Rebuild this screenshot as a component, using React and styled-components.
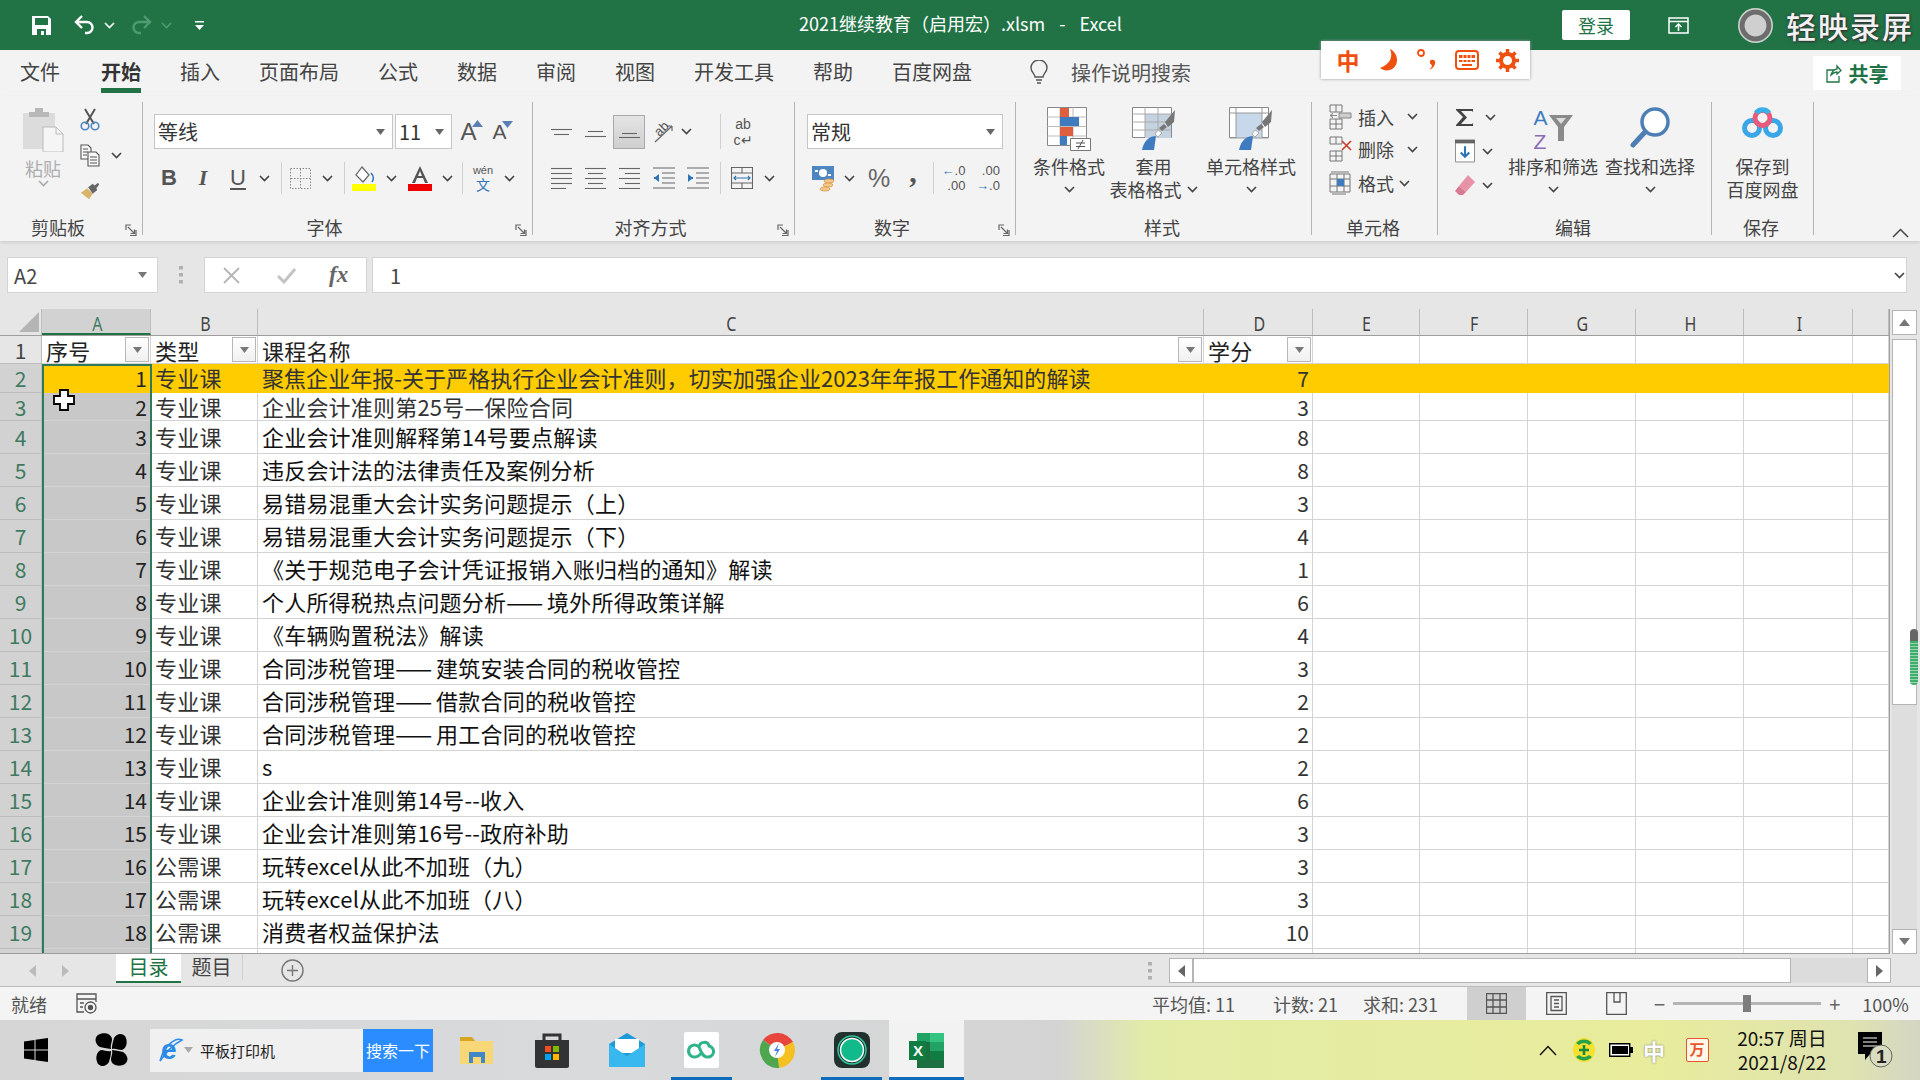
import React from "react";
import styled, { createGlobalStyle } from "styled-components";

const GlobalStyle = createGlobalStyle`
  html, body { margin: 0; padding: 0; background: #e6e6e6; overflow: hidden; }
  * { box-sizing: border-box; }
  body { font-family: "Noto Sans CJK SC", "Noto Sans", sans-serif; }
`;

const GREEN = "#217346";

const Page = styled.div`
  position: relative;
  width: 1920px;
  height: 1080px;
  display: flex;
  flex-direction: column;
  overflow: hidden;
  color: #444;
`;

/* ---------- small shared parts ---------- */

const Tool = styled.div`
  flex: none;
  width: ${(p) => p.$w || 20}px;
  height: ${(p) => p.$h || 32}px;
  margin-left: ${(p) => p.$ml || 0}px;
  display: flex;
  align-items: center;
  justify-content: center;
  color: ${(p) => p.$color || "#444"};
  font-size: ${(p) => p.$size || 18}px;
`;

const VSep = styled.div`
  flex: none;
  width: 1px;
  height: ${(p) => p.$h || 32}px;
  margin-left: ${(p) => p.$ml || 0}px;
  background: #d0d0d0;
`;

const Chev = ({ color = "#444", up }) => (
  <svg width="11" height="7" viewBox="0 0 11 7">
    <path d={up ? "M1 6l4.5-4.5L10 6" : "M1 1l4.5 4.5L10 1"} fill="none" stroke={color} strokeWidth="1.6" />
  </svg>
);

const Tri = ({ color = "#666" }) => (
  <svg width="9" height="6" viewBox="0 0 9 6">
    <path d="M0 0h9L4.5 6z" fill={color} />
  </svg>
);

const Launcher = styled.div`
  position: absolute;
  right: 5px;
  bottom: -1px;
  width: 12px;
  height: 12px;
  display: flex;
`;

const LauncherIcon = () => (
  <Launcher>
    <svg width="12" height="12" viewBox="0 0 12 12" fill="none" stroke="#666" strokeWidth="1.2">
      <path d="M11 6v5.500H5M1 6V1h5M3 3l6.500 6.500M9.500 5.500v4h-4" />
    </svg>
  </Launcher>
);

/* ---------- title bar ---------- */

const TitleBar = styled.div`
  flex: none;
  height: 50px;
  background: ${GREEN};
  display: flex;
  align-items: center;
  padding: 0 6px 0 16px;
`;

const Title = styled.div`
  margin-left: 592px;
  margin-top: -4px;
  color: #fff;
  font-size: 18px;
  word-spacing: 3px;
  white-space: pre;
`;

const Login = styled.div`
  margin-left: auto;
  width: 68px;
  height: 30px;
  background: #fff;
  border-radius: 2px;
  color: ${GREEN};
  font-size: 18px;
  display: flex;
  align-items: center;
  justify-content: center;
`;

const RecDot = styled.div`
  flex: none;
  width: 35px;
  height: 35px;
  margin-left: 12px;
  border-radius: 50%;
  background: radial-gradient(circle, #cfcfcf 0 42%, #6d6d6d 46% 62%, #c8d0c8 66% 100%);
`;

const RecText = styled.div`
  margin-left: 13px;
  color: #f2f2f2;
  font-size: 30px;
  letter-spacing: 2px;
  line-height: 1;
  font-weight: 500;
  white-space: nowrap;
  text-shadow: 0 0 3px #333, 1px 1px 2px #333;
`;

const ImeBar = styled.div`
  position: absolute;
  left: 1321px;
  top: 41px;
  width: 209px;
  height: 38px;
  background: #fff;
  box-shadow: 0 0 3px #999;
  display: flex;
  align-items: center;
  padding-left: 7px;
  z-index: 3;
`;

const ImeChar = styled.span`
  color: #f0500f;
  font-size: 23px;
  font-weight: 700;
  line-height: 1;
`;

/* ---------- tab bar ---------- */

const TabBar = styled.div`
  flex: none;
  height: 46px;
  background: #f3f3f3;
  display: flex;
  align-items: flex-start;
  gap: 39px;
  padding-left: 20px;
`;

const Tab = styled.div`
  position: relative;
  height: 46px;
  font-size: 20px;
  line-height: 44px;
  color: ${(p) => (p.$active ? "#333" : "#444")};
  font-weight: ${(p) => (p.$active ? 700 : 400)};
  margin-right: ${(p) => p.$mr || 0}px;
  ${(p) =>
    p.$active &&
    `&::after {
      content: "";
      position: absolute;
      left: 0;
      right: 0;
      bottom: 3px;
      height: 5px;
      background: ${GREEN};
    }`}
`;

const SearchHint = styled.div`
  display: flex;
  align-items: center;
  gap: 23px;
  height: 44px;
  margin-left: 19px;
  font-size: 20px;
  color: #555;
`;

const ShareBtn = styled.div`
  margin: 6px 19px 0 auto;
  width: 88px;
  height: 34px;
  background: #fff;
  display: flex;
  align-items: center;
  justify-content: center;
  gap: 7px;
  color: ${GREEN};
  font-size: 20px;
  font-weight: 700;
`;

/* ---------- ribbon ---------- */

const Ribbon = styled.div`
  flex: none;
  height: 145px;
  padding-top: 6px;
  background: #f3f3f3;
  display: flex;
  align-items: flex-start;
  box-shadow: 0 2px 3px #d0d0d0;
  position: relative;
  z-index: 1;
`;

const Group = styled.div`
  position: relative;
  flex: none;
  width: ${(p) => p.$w}px;
  height: 133px;
  border-right: 1px solid #b5b5b5;
`;

const GroupBody = styled.div`
  height: 115px;
  padding-left: ${(p) => p.$pad || 0}px;
  display: flex;
  flex-direction: ${(p) => (p.$row ? "row" : "column")};
`;

const GroupLabel = styled.div`
  height: 20px;
  line-height: 20px;
  font-size: 18px;
  text-align: center;
  color: #444;
  padding-right: ${(p) => (p.$launcher ? 26 : 3)}px;
`;

const Row = styled.div`
  flex: none;
  display: flex;
  align-items: center;
  height: ${(p) => p.$h}px;
  margin-top: ${(p) => p.$mt || 0}px;
  padding-left: ${(p) => p.$pl || 0}px;
`;

const ComboBox = styled.div`
  flex: none;
  width: ${(p) => p.$w}px;
  height: 35px;
  margin-left: ${(p) => p.$ml || 0}px;
  background: #fff;
  border: 1px solid #c6c6c6;
  display: flex;
  align-items: center;
  justify-content: space-between;
  padding: 0 7px 0 3px;
  font-size: 20px;
  color: #333;
`;

const Pressed = styled(Tool)`
  height: 34px;
  background: linear-gradient(#e4e4e4, #cfcfcf);
  border: 1px solid #a9a9a9;
  margin-left: 1px;
`;

const PasteCol = styled.div`
  width: 58px;
  margin-left: 14px;
  padding-top: 5px;
  display: flex;
  flex-direction: column;
  align-items: center;
  color: #aaa;
  font-size: 18px;
`;

const PasteText = styled.div`
  margin-top: 4px;
  line-height: 24px;
  color: #adadad;
`;

const ToolCol = styled.div`
  display: flex;
  flex-direction: column;
`;

const BigBtn = styled.div`
  flex: none;
  width: ${(p) => p.$w}px;
  padding-top: 5px;
  display: flex;
  flex-direction: column;
  align-items: center;
`;

const BigIcon = styled.div`
  height: 48px;
  display: flex;
  justify-content: center;
`;

const BigLine = styled.div`
  height: 23px;
  line-height: 23px;
  font-size: 18px;
  white-space: nowrap;
  color: #444;
  display: flex;
  align-items: center;
  gap: 5px;
`;

const CellsText = styled.div`
  flex: none;
  width: 36px;
  margin-left: 5px;
  font-size: 18px;
  white-space: nowrap;
  color: #444;
`;

const AA = styled.span`
  position: relative;
  font-family: "Liberation Sans", sans-serif;
  font-size: ${(p) => p.$size}px;
  color: #555;
  line-height: 1;
`;

const AAMark = styled.span`
  position: absolute;
  right: -6px;
  top: 0;
  display: flex;
`;

const StyleLetter = styled.span`
  font-family: ${(p) => (p.$serif ? '"Liberation Serif", serif' : '"Liberation Sans", sans-serif')};
  font-weight: ${(p) => (p.$bold ? 700 : 400)};
  font-style: ${(p) => (p.$italic ? "italic" : "normal")};
  text-decoration: ${(p) => (p.$under ? "underline" : "none")};
  text-underline-offset: 3px;
  font-size: 22px;
  color: #555;
`;

const WenBox = styled.div`
  display: flex;
  flex-direction: column;
  align-items: center;
  color: #2f75b5;
  line-height: 1;
`;

const WenTop = styled.span`
  font-size: 11px;
  line-height: 12px;
  color: #555;
  font-family: "Liberation Sans", sans-serif;
`;

const WenBottom = styled.span`
  font-size: 14px;
  line-height: 16px;
  font-family: "Noto Sans CJK SC", sans-serif;
`;

const WrapBox = styled.div`
  display: flex;
  flex-direction: column;
  align-items: center;
  font-family: "Liberation Sans", sans-serif;
  font-size: 14px;
  line-height: 16px;
  color: #555;
`;

const Percent = styled.span`
  font-family: "Liberation Sans", sans-serif;
  font-size: 25px;
  color: #666;
`;

const Comma = styled.span`
  font-family: "Liberation Serif", serif;
  font-weight: 700;
  font-size: 30px;
  line-height: 1;
  margin-top: -12px;
  color: #555;
`;

const Decimals = styled.div`
  font-family: "Liberation Sans", sans-serif;
  font-size: 13px;
  line-height: 15px;
  color: #555;
  text-align: right;
  white-space: nowrap;
`;

const DecArrow = styled.span`
  color: #2f75b5;
  font-weight: 700;
`;

const SortBox = styled.div`
  display: flex;
  align-items: flex-start;
  height: 44px;
`;

const SortLetters = styled.div`
  display: flex;
  flex-direction: column;
  font-family: "Liberation Sans", sans-serif;
  font-size: 21px;
  line-height: 24.2px;
  margin-top: -1px;
`;

const SortLetter = styled.span`
  color: ${(p) => p.$color};
`;

const Collapse = styled.div`
  position: absolute;
  right: 11px;
  bottom: 3px;
  display: flex;
`;

/* ---------- formula bar ---------- */

const FormulaBar = styled.div`
  flex: none;
  height: 68px;
  padding: 16px 13px 0 7px;
  background: #e6e6e6;
  display: flex;
  align-items: flex-start;
`;

const NameBox = styled.div`
  flex: none;
  width: 151px;
  height: 36px;
  background: #fff;
  border: 1px solid #d4d4d4;
  display: flex;
  align-items: center;
  justify-content: space-between;
  padding: 0 10px 0 6px;
  font-size: 20px;
  color: #444;
`;

const Grip = styled.div`
  flex: none;
  width: 46px;
  height: 36px;
  display: flex;
  align-items: center;
  justify-content: center;
`;

const FxBox = styled.div`
  flex: none;
  width: 163px;
  height: 36px;
  background: #fff;
  border: 1px solid #d4d4d4;
  display: flex;
  align-items: center;
  padding-left: 17px;
`;

const FxSign = styled.span`
  font-family: "Liberation Serif", serif;
  font-style: italic;
  font-weight: 700;
  font-size: 23px;
  color: #666;
  margin-left: 33px;
`;

const FormulaInput = styled.div`
  flex: 1;
  height: 36px;
  margin-left: 5px;
  background: #fff;
  border: 1px solid #d4d4d4;
  display: flex;
  align-items: center;
  justify-content: space-between;
  padding: 0 0 0 17px;
  font-size: 20px;
  color: #444;
`;

const InputChev = styled.div`
  margin-right: 1px;
  display: flex;
`;

/* ---------- sheet ---------- */

const SheetArea = styled.div`
  position: relative;
  flex: none;
  height: 645px;
  display: flex;
  background: #e6e6e6;
`;

const Sheet = styled.div`
  position: relative;
  flex: none;
  width: 1890px;
  height: 645px;
  overflow: hidden;
  border-right: 1px solid #9e9e9e;
  border-bottom: 1px solid #9e9e9e;
`;

const SheetRow = styled.div`
  display: flex;
  height: ${(p) => p.$h}px;
  background: ${(p) => (p.$hl ? "#ffcc00" : "#fff")};
`;

const HeadRow = styled.div`
  display: flex;
  height: 27px;
  background: #e6e6e6;
  border-bottom: 1px solid #9e9e9e;
`;

const ColHead = styled.div`
  flex: none;
  width: ${(p) => p.$w}px;
  background: ${(p) => (p.$sel ? "#d2d2d2" : "#e6e6e6")};
  color: ${(p) => (p.$sel ? "#3f7a5f" : "#444")};
  border-right: 1px solid #bdbdbd;
  ${(p) => p.$sel && `border-bottom: 2px solid ${GREEN};`}
  font-size: 20px;
  line-height: 28px;
  padding-left: 2px;
  text-align: center;
`;

const ColLetter = styled.span`
  display: inline-block;
  transform: scaleX(0.8);
  font-family: "Noto Sans", sans-serif;
`;

const Corner = styled.div`
  flex: none;
  width: 42px;
  display: flex;
  align-items: flex-end;
  justify-content: flex-end;
  padding: 0 2px 3px 0;
  border-right: 1px solid #bdbdbd;
`;

const RowHead = styled.div`
  flex: none;
  width: 42px;
  background: ${(p) => (p.$sel ? "#d2d2d2" : "#e6e6e6")};
  color: ${(p) => (p.$sel ? "#3f7a5f" : "#444")};
  border-right: 1px solid #bdbdbd;
  border-bottom: 1px solid #bdbdbd;
  font-size: 21px;
  text-align: center;
  display: flex;
  align-items: center;
  justify-content: center;
  overflow: hidden;
`;

const Cell = styled.div`
  position: relative;
  flex: none;
  width: ${(p) => p.$w}px;
  padding: ${(p) => (p.$num ? "0 3px 0 0" : p.$head ? "0 0 0 4px" : "0 0 2px 4px")};
  background: ${(p) => (p.$sel ? "#c8c8c8" : "transparent")};
  border-right: 1px solid ${(p) => (p.$bare ? "transparent" : "#d4d4d4")};
  border-bottom: 1px solid ${(p) => (p.$bare ? "transparent" : "#d4d4d4")};
  display: flex;
  align-items: center;
  justify-content: ${(p) => (p.$num ? "flex-end" : "flex-start")};
  font-size: ${(p) => (p.$num ? 21 : 22)}px;
  letter-spacing: ${(p) => (p.$num ? 0 : p.$tight ? 0.05 : 0.2)}px;
  color: ${(p) => p.$color || "#222"};
  white-space: nowrap;
`;

const WideDash = styled.span`
  letter-spacing: 4px;
`;

const FilterBtn = styled.div`
  position: absolute;
  right: 1px;
  top: 1px;
  width: 24px;
  height: 25px;
  background: linear-gradient(#fff, #f0f0f0);
  border: 1px solid #b8b8b8;
  display: flex;
  align-items: center;
  justify-content: center;
`;

const RangeBox = styled.div`
  position: absolute;
  left: 42px;
  top: 55px;
  width: 110px;
  height: 595px;
  border: 2px solid #2f7a5c;
  pointer-events: none;
`;

const CursorMark = styled.div`
  position: absolute;
  left: 53px;
  top: 80px;
  display: flex;
`;

const VScroll = styled.div`
  flex: none;
  width: 25px;
  margin-left: 2px;
  display: flex;
  flex-direction: column;
`;

const ScrollBtn = styled.div`
  flex: none;
  height: 25px;
  margin-top: ${(p) => p.$mt || 0}px;
  background: #fff;
  border: 1px solid #b5b5b5;
  display: flex;
  align-items: center;
  justify-content: center;
`;

const VThumb = styled.div`
  flex: none;
  height: 366px;
  margin-top: 4px;
  background: #fff;
  border: 1px solid #b5b5b5;
`;

const VTrack = styled.div`
  flex: 1;
  background: #dedede;
`;

const GreenHandle = styled.div`
  position: absolute;
  left: 1910px;
  top: 320px;
  width: 8px;
  height: 56px;
  border-radius: 4px;
  background: repeating-linear-gradient(#3fae6b 0 2px, #9ad4ae 2px 3px);
  border-top: 12px solid #666;
`;

/* ---------- sheet tabs ---------- */

const SheetTabs = styled.div`
  flex: none;
  height: 33px;
  background: #e6e6e6;
  border-bottom: 1px solid #bcbcbc;
  display: flex;
  align-items: flex-start;
`;

const SheetTab = styled.div`
  flex: none;
  height: ${(p) => (p.$active ? 29 : 28)}px;
  width: ${(p) => p.$w}px;
  background: ${(p) => (p.$active ? "#fff" : "transparent")};
  border-bottom: ${(p) => (p.$active ? `2px solid ${GREEN}` : "none")};
  color: ${(p) => (p.$active ? GREEN : "#444")};
  font-size: 20px;
  line-height: 26px;
  text-align: center;
`;

const HScrollBtn = styled.div`
  flex: none;
  width: 24px;
  height: 25px;
  margin: 4px 0 0 ${(p) => p.$ml || 0}px;
  background: #fff;
  border: 1px solid #b5b5b5;
  display: flex;
  align-items: center;
  justify-content: center;
`;

const HThumb = styled.div`
  flex: none;
  width: 598px;
  height: 25px;
  margin-top: 4px;
  background: #fff;
  border: 1px solid #b5b5b5;
`;

const HTrack = styled.div`
  flex: none;
  width: 76px;
  height: 25px;
  margin-top: 4px;
  background: #dcdcdc;
`;

/* ---------- status bar ---------- */

const StatusBar = styled.div`
  flex: none;
  height: 33px;
  background: #f4f4f4;
  display: flex;
  align-items: center;
  font-size: 18px;
  color: #555;
  padding-left: 11px;
`;

const StatText = styled.span`
  flex: none;
  margin-left: ${(p) => p.$ml}px;
  white-space: nowrap;
`;

const ViewBtn = styled.div`
  flex: none;
  width: ${(p) => p.$w}px;
  height: 33px;
  margin-left: ${(p) => p.$ml || 0}px;
  background: ${(p) => (p.$on ? "#cfcfcf" : "transparent")};
  display: flex;
  align-items: center;
  justify-content: center;
`;

const Slider = styled.div`
  position: relative;
  flex: none;
  width: 148px;
  height: 3px;
  background: #b5b5b5;
  margin-left: 8px;
`;

const SliderThumb = styled.div`
  position: absolute;
  left: 70px;
  top: -7px;
  width: 8px;
  height: 17px;
  background: #7d7d7d;
`;

const ZoomSign = styled.span`
  flex: none;
  margin-left: ${(p) => p.$ml}px;
  font-size: 20px;
  line-height: 1;
  color: #666;
`;

/* ---------- taskbar ---------- */

const Taskbar = styled.div`
  flex: none;
  height: 60px;
  display: flex;
  align-items: center;
  background: linear-gradient(90deg, #d6d6d6 0, #d8dadb 600px, #d4d4d4 1060px, #e3eca6 1150px, #e8ec9c 1650px, #dfe3b0 1850px, #d4d6c4 1920px);
`;

const TaskSlot = styled.div`
  position: relative;
  flex: none;
  width: ${(p) => p.$w}px;
  height: 60px;
  display: flex;
  align-items: center;
  justify-content: center;
  ${(p) => p.$active && "background: #f2f2f2;"}
  ${(p) =>
    p.$mark &&
    `&::after {
      content: "";
      position: absolute;
      left: 50%;
      bottom: 0;
      width: ${p.$mark}px;
      height: 3px;
      margin-left: -${p.$mark / 2}px;
      background: #0f6cbd;
    }`}
`;

const SearchBox = styled.div`
  flex: none;
  width: 213px;
  height: 43px;
  background: #f0f0f0;
  display: flex;
  align-items: center;
  padding-left: 8px;
  font-size: 15px;
  color: #222;
`;

const SearchLabel = styled.span`
  margin-left: 7px;
`;

const SearchGo = styled.div`
  flex: none;
  width: 70px;
  height: 43px;
  margin-right: 6px;
  background: #2b8cff;
  color: #fff;
  font-size: 16px;
  display: flex;
  align-items: center;
  justify-content: center;
`;

const Tray = styled.div`
  margin-left: auto;
  display: flex;
  align-items: center;
  padding-right: 8px;
`;

const Clock = styled.div`
  flex: none;
  width: 112px;
  text-align: center;
  font-size: 19px;
  line-height: 24px;
  color: #111;
  white-space: nowrap;
`;

const TrayIme = styled.span`
  color: #fff;
  font-size: 22px;
  font-weight: 700;
  line-height: 1;
  text-shadow: 0 0 2px #667;
`;

const WanBox = styled.div`
  width: 23px;
  height: 24px;
  border: 1.5px solid #e8552d;
  border-radius: 2px;
  background: #fff7e8;
  color: #e8552d;
  font-size: 15px;
  line-height: 20px;
  font-weight: 700;
  text-align: center;
`;

/* ---------- drawn icons ---------- */

const SaveIcon = () => (
  <svg width="19" height="19" viewBox="0 0 19 19">
    <path d="M0 0h16l3 3v16H0z" fill="#fff" />
    <path d="M3 2h13v7H3z" fill={GREEN} />
    <path d="M5 13h9v6h-2v-4H9v4H5z" fill={GREEN} />
  </svg>
);

const UndoIcon = ({ color = "#fff", flip }) => (
  <svg width="23" height="20" viewBox="0 0 23 20" transform={flip ? "scale(-1 1)" : undefined}>
    <path d="M9 1L3 7l6 6M3 7h11a5.500 5.500 0 0 1 0 11h-2" fill="none" stroke={color} strokeWidth="2.4" />
  </svg>
);

const CustomizeIcon = () => (
  <svg width="9" height="11" viewBox="0 0 9 11">
    <path d="M0 1h9v1.600H0z M0 5h9L4.500 10z" fill="#fff" />
  </svg>
);

const RestoreIcon = () => (
  <svg width="21" height="17" viewBox="0 0 21 17" fill="none" stroke="#fff" strokeWidth="1.5">
    <path d="M1 1h19v15H1zM1 4.500h19M10.500 14V7.500M7.500 10l3-3 3 3" />
  </svg>
);

const MoonIcon = () => (
  <svg width="22" height="26" viewBox="0 0 22 26">
    <path d="M13 2c3 7 1 15-10 19 6 5 17 2 17-8 0-5-3-9-7-11z" fill="#f0500f" />
  </svg>
);

const PunctIcon = () => (
  <svg width="22" height="26" viewBox="0 0 22 26">
    <circle cx="5" cy="6" r="3" fill="none" stroke="#f0500f" strokeWidth="1.8" />
    <path d="M15 13c3-1 5 1 4 4s-3 5-6 6c2-2 3-3 3-5-2 0-3-4-1-5z" fill="#f0500f" />
  </svg>
);

const KeyboardIcon = () => (
  <svg width="24" height="20" viewBox="0 0 24 20">
    <rect x="1" y="1" width="22" height="18" rx="3" fill="none" stroke="#f0500f" strokeWidth="2" />
    <path d="M4 5h16v3H4zM4 10h16v2H4zM7 14h10v2H7z" fill="#f0500f" />
    <path d="M8 5v7M12 5v7M16 5v7" stroke="#fff" strokeWidth="1" />
  </svg>
);

const GearIcon = () => (
  <svg width="23" height="23" viewBox="0 0 23 23">
    <circle cx="11.500" cy="11.500" r="6.500" fill="none" stroke="#f0500f" strokeWidth="4" />
    <path d="M11.500 0v4M11.500 19v4M0 11.500h4M19 11.500h4M3.500 3.500l3 3M16.500 16.500l3 3M19.500 3.500l-3 3M6.500 16.500l-3 3" stroke="#f0500f" strokeWidth="3.500" />
  </svg>
);

const BulbIcon = () => (
  <svg width="18" height="25" viewBox="0 0 18 25" fill="none" stroke="#555" strokeWidth="1.4">
    <path d="M5 17c0-3-4-5-4-9a8 8 0 0 1 16 0c0 4-4 6-4 9zM6 20h6M7 23h4" />
  </svg>
);

const ShareIcon = () => (
  <svg width="16" height="19" viewBox="0 0 16 19" fill="none" stroke={GREEN} strokeWidth="1.3">
    <path d="M9 6H1v12h12v-6M5 11c1-4 4-6 6-6V2l4 4.500L11 10V8c-2 0-4 1-6 3z" />
  </svg>
);

const PasteIcon = () => (
  <svg width="41" height="45" viewBox="0 0 41 45">
    <path d="M0 6h32v36H0z" fill="#dcdcdc" />
    <path d="M6 5h6V1h8v4h6v5H6z" fill="#b8b8b8" />
    <path d="M20 20h13l7 7v18H20z" fill="#f5f5f5" stroke="#bcbcbc" />
    <path d="M33 20v7h7" fill="none" stroke="#bcbcbc" />
  </svg>
);

const ScissorsIcon = () => (
  <svg width="20" height="23" viewBox="0 0 20 23" fill="none">
    <path d="M5 1l9 15M15 1L6 16" stroke="#555" strokeWidth="2" />
    <circle cx="5" cy="18" r="3.800" stroke="#4d86c0" strokeWidth="1.600" />
    <circle cx="15" cy="18" r="3.800" stroke="#4d86c0" strokeWidth="1.600" />
  </svg>
);

const CopyIcon = () => (
  <svg width="20" height="23" viewBox="0 0 20 23" fill="#f8f8f8" stroke="#555" strokeWidth="1.100">
    <path d="M1 1h7l3 3v11H1zM3 5h5M3 8h5M3 11h4" />
    <path d="M8 8h8l3 3v11H8zM10 13h7M10 16h7M10 19h7" />
  </svg>
);

const BrushIcon = () => (
  <svg width="22" height="20" viewBox="0 0 22 20">
    <path d="M8 7l6 6-4 6-9-7z" fill="#d9b36a" />
    <path d="M9 6l5-4 2 2 4-3 1 2-3 4 1 2-5 4z" fill="#666" />
  </svg>
);

const BorderIcon = () => (
  <svg width="21" height="21" viewBox="0 0 21 21" fill="none" stroke="#888" strokeWidth="1" strokeDasharray="1.500 1.500">
    <path d="M.5.5h20v20H.5zM10.500 1v19M1 10.500h19" />
  </svg>
);

const FillIcon = () => (
  <svg width="24" height="26" viewBox="0 0 24 26">
    <path d="M10 2l7 8-6 7-7-7z" fill="#fff" stroke="#666" strokeWidth="1.200" />
    <path d="M19 8c3 3 3 6 1 9" fill="none" stroke="#2f75b5" strokeWidth="1.500" />
    <path d="M0 19h24v7H0z" fill="#ffff00" />
  </svg>
);

const FontColorIcon = () => (
  <svg width="24" height="26" viewBox="0 0 24 26">
    <path d="M12 1L4 18h3l2-5h6l2 5h3zM10 11l2-5 2 5z" fill="#555" fillRule="evenodd" />
    <path d="M0 19h24v7H0z" fill="#ee0000" />
  </svg>
);

const AlignLines = ({ lines, w = 21, h = 14 }) => (
  <svg width={w} height={h} viewBox={`0 0 ${w} ${h}`}>
    {lines.map(([x1, x2, y]) => (
      <path key={`${x1}-${y}`} d={`M${x1} ${y + 0.5}H${x2}`} stroke="#666" strokeWidth="1.100" />
    ))}
  </svg>
);

const OrientIcon = () => (
  <svg width="24" height="28" viewBox="0 0 24 28" fill="none">
    <path d="M4 24L21 8M21 8h-5M21 8v5" stroke="#666" strokeWidth="1.200" />
    <text x="5" y="17" fontSize="13" fill="#555" fontFamily="Liberation Sans" transform="rotate(-45 9 14)">ab</text>
  </svg>
);

const IndentIcon = ({ flip }) => (
  <svg width="22" height="22" viewBox="0 0 22 22" fill="none">
    <path d="M9 6h13M9 11h13M9 16h13M0 1h22M0 21h22" stroke="#666" strokeWidth="1.100" />
    <path d={flip ? "M1 11l5-4v8z" : "M6 11L1 7v8z"} fill="#2f75b5" />
    <path d="M1 10h5v2H1z" fill="#2f75b5" />
  </svg>
);

const MergeIcon = () => (
  <svg width="22" height="22" viewBox="0 0 22 22" fill="none" stroke="#666" strokeWidth="1.100">
    <path d="M.5.5h21v21H.5zM.5 6h21M.5 16h21M11 .5V6M11 16v5.500" />
    <path d="M3 11h16M5 9l-2 2 2 2M17 9l2 2-2 2" stroke="#2f75b5" />
  </svg>
);

const CurrencyIcon = () => (
  <svg width="25" height="27" viewBox="0 0 25 27">
    <path d="M1 1h22v14H1z" fill="#4d86c0" />
    <circle cx="12" cy="8" r="4" fill="#fff" />
    <path d="M4 6h3M17 10h3" stroke="#fff" strokeWidth="2" />
    <g fill="#f2c88a" stroke="#d89b4a" strokeWidth=".8">
      <ellipse cx="18" cy="16" rx="5" ry="2" />
      <ellipse cx="17" cy="20" rx="5" ry="2" />
      <ellipse cx="14" cy="24" rx="5" ry="2" />
    </g>
  </svg>
);

const CondIcon = () => (
  <svg width="44" height="44" viewBox="0 0 44 44">
    <path d="M.5.5h39v38H.5z" fill="#fff" stroke="#888" />
    <path d="M.5 10h39M.5 19.500h39M.5 29h39M13 .5v38M26 .5v38" stroke="#bbb" />
    <path d="M13 1h9v9h-9zM13 20h13v9H13z" fill="#dd5f3f" />
    <path d="M13 10h19v9H13zM13 29h7v9h-7z" fill="#3f7cbf" />
    <path d="M23.500 31.500h20v12h-20z" fill="#fff" stroke="#777" />
    <path d="M29 36h9M29 39.500h9M36 33l-5 9" stroke="#555" fill="none" />
  </svg>
);

const TableStyleIcon = ({ plain }) => (
  <svg width="44" height="44" viewBox="0 0 44 44">
    <path d="M.5.5h39v30H.5z" fill="#fff" stroke="#888" />
    {plain ? (
      <>
        <path d="M7 6h26v25H7z" fill="#c6d8ea" />
        <path d="M.5 6h39M.5 31h39M7 .5v30M33 .5v30" stroke="#999" />
      </>
    ) : (
      <>
        <path d="M13 7h26v24H13z" fill="#c5d2df" />
        <path d="M.5 7h39M.5 15h39M.5 23h39M13 .5v30M26 .5v30" stroke="#aaa" />
      </>
    )}
    <path d="M10 43c2-10 8-14 14-14l-2 14z" fill="#3f7cbf" />
    <path d="M26 30l-3-3 3-4 4 3z" fill="#fff" stroke="#aaa" />
    <path d="M30 24l-3-3 5-4 3 3zM34 17l-1-2 10-12-1 12-6 5z" fill="#777" />
  </svg>
);

const CellOp = ({ del, fmt }) => (
  <svg width="24" height="26" viewBox="0 0 24 26" fill="none" stroke="#777" strokeWidth="1">
    {fmt ? (
      <>
        <path d="M1 4h20v18H1zM1 9h20M1 16h20M8 4v18M15 4v18M2 2h18" />
        <path d="M8 9h7v7H8z" fill="#3f7cbf" stroke="none" />
        <path d="M3 24h14" />
      </>
    ) : (
      <>
        <path d="M1 1h12v7H1zM7 1v7M1 15h12v10H1zM7 15v10M1 20h12" />
        {del ? (
          <path d="M13 5l9 9M22 5l-9 9" stroke="#cc3a2a" strokeWidth="1.600" />
        ) : (
          <path d="M10 9h12v5H10zM1 11.500h7M4 9l-3 2.500L4 14" stroke="#888" fill="#ccc" />
        )}
      </>
    )}
  </svg>
);

const SigmaIcon = () => (
  <svg width="20" height="19" viewBox="0 0 20 19">
    <path d="M1 1h17v3l-1-1H6l6 6.500L6 16h11l1-1v3H1v-1l7-8L1 2z" fill="#444" />
  </svg>
);

const FillDownIcon = () => (
  <svg width="21" height="24" viewBox="0 0 21 24">
    <path d="M.5 3h20v20.500H.5z" fill="#fff" stroke="#888" />
    <path d="M0 0h21v4H0z" fill="#666" />
    <path d="M10.500 7v11M6 13.500l4.500 4.500 4.500-4.500" fill="none" stroke="#2f75b5" strokeWidth="2.200" />
  </svg>
);

const EraserIcon = () => (
  <svg width="20" height="20" viewBox="0 0 20 20">
    <path d="M13 0l7 7-9 10-7-6z" fill="#e892a8" />
    <path d="M4 11l7 6-3 3-4 0-4-4z" fill="#d87a93" />
  </svg>
);

const FunnelIcon = () => (
  <svg width="24" height="28" viewBox="0 0 24 28">
    <path d="M0 0h24l-9 12v14H9V12z" fill="#8a8a8a" />
    <path d="M7 3h10l-5 6z" fill="#ddd" />
  </svg>
);

const SortIcon = () => (
  <SortBox>
    <SortLetters>
      <SortLetter $color="#3f7cbf">A</SortLetter>
      <SortLetter $color="#8a6db5">Z</SortLetter>
    </SortLetters>
    <Tool $w={24} $h={44} $ml={1}>
      <FunnelIcon />
    </Tool>
  </SortBox>
);

const FindIcon = () => (
  <svg width="41" height="41" viewBox="0 0 41 41" fill="none">
    <circle cx="25" cy="15" r="13" fill="#fff" stroke="#4d7fb5" strokeWidth="3.500" />
    <path d="M15 25L3 38" stroke="#4d7fb5" strokeWidth="5" strokeLinecap="round" />
  </svg>
);

const BaiduIcon = () => (
  <svg width="41" height="32" viewBox="0 0 41 32" fill="none">
    <circle cx="10" cy="21" r="7.500" stroke="#3aa6e8" strokeWidth="5" />
    <circle cx="31" cy="21" r="7.500" stroke="#3aa6e8" strokeWidth="5" />
    <circle cx="20.500" cy="11" r="7.500" stroke="#e85b7a" strokeWidth="5" />
    <path d="M14 6a8 8 0 0 1 13 0" stroke="#3ab0e8" strokeWidth="5" />
  </svg>
);

const CrossIcon = () => (
  <svg width="19" height="19" viewBox="0 0 19 19">
    <path d="M2 2l15 15M17 2L2 17" stroke="#b5b5b5" strokeWidth="1.800" />
  </svg>
);

const CheckIcon = () => (
  <svg width="19" height="17" viewBox="0 0 19 17">
    <path d="M1 9l6 6L18 2" fill="none" stroke="#c4c4c4" strokeWidth="3" />
  </svg>
);

const GripDots = () => (
  <svg width="4" height="18" viewBox="0 0 4 18" fill="#b0b0b0">
    <rect y="0" width="4" height="3.500" />
    <rect y="7" width="4" height="3.500" />
    <rect y="14" width="4" height="3.500" />
  </svg>
);

const CornerTri = () => (
  <svg width="20" height="20" viewBox="0 0 20 20">
    <path d="M20 0v20H0z" fill="#b5b5b5" />
  </svg>
);

const CrossCursor = () => (
  <svg width="22" height="22" viewBox="0 0 22 22">
    <path d="M7 1h8v6h6v8h-6v6H7v-6H1V7h6z" fill="#fff" stroke="#000" strokeWidth="1.800" />
  </svg>
);

const ArrowIcon = ({ dir, color = "#777" }) => {
  const d = { up: "M0 7L5.500 0 11 7z", down: "M0 0h11L5.500 7z", left: "M7 0v12L0 6z", right: "M0 0v12l7-6z" };
  const wide = dir === "up" || dir === "down";
  return (
    <svg width={wide ? 11 : 7} height={wide ? 7 : 12}>
      <path d={d[dir]} fill={color} />
    </svg>
  );
};

const PlusCircle = () => (
  <svg width="23" height="23" viewBox="0 0 23 23" fill="none" stroke="#777" strokeWidth="1.400">
    <circle cx="11.500" cy="11.500" r="10.500" />
    <path d="M11.500 6v11M6 11.500h11" />
  </svg>
);

const MacroIcon = () => (
  <svg width="21" height="21" viewBox="0 0 21 21" fill="none" stroke="#555" strokeWidth="1.300">
    <path d="M8 19H1V1h19v8M1 6h19M4 10h4M4 14h3" />
    <circle cx="14.500" cy="14.500" r="5.500" />
    <circle cx="14.500" cy="14.500" r="2" fill="#555" />
  </svg>
);

const NormalView = () => (
  <svg width="21" height="21" viewBox="0 0 21 21" fill="none" stroke="#555" strokeWidth="1.300">
    <path d="M.5.5h20v20H.5zM.5 7h20M.5 14h20M7 .5v20M14 .5v20" />
  </svg>
);

const PageView = () => (
  <svg width="21" height="23" viewBox="0 0 21 23" fill="none" stroke="#555" strokeWidth="1.300">
    <path d="M.7.7h19.600v21.600H.7zM5 4.500h11v14H5zM8 8h5M8 11.500h5M8 15h5" />
  </svg>
);

const BreakView = () => (
  <svg width="21" height="23" viewBox="0 0 21 23" fill="none" stroke="#555" strokeWidth="1.300">
    <path d="M.7.7h19.600v21.600H.7zM8 .7V10h6V.7" />
  </svg>
);

const WinIcon = () => (
  <svg width="24" height="24" viewBox="0 0 24 24" fill="#000">
    <path d="M0 3.500L10.500 2v9.500H0zM11.500 1.800L24 0v11.500H11.500zM0 12.500h10.500V22L0 20.500zM11.500 12.500H24V24l-12.500-1.800z" />
  </svg>
);

const FanIcon = () => (
  <svg width="33" height="34" viewBox="0 0 33 34" fill="#000">
    <path d="M3 2c5-3 13-2 14 4 0 4-2 6-1 10-5-1-8-1-11-2-5-3-6-9-2-12z" />
    <path d="M30 3c3 5 2 12-3 14-4 0-6-2-10-1 0-5 1-7 2-11 3-5 8-5 11-2z" />
    <path d="M30 31c-5 3-13 2-14-4 0-4 2-6 1-10 5 1 8 1 11 2 5 3 6 9 2 12z" />
    <path d="M3 31c-3-5-2-12 3-14 4 0 6 2 10 1 0 5-1 7-2 11-3 5-8 5-11 2z" />
  </svg>
);

const IeIcon = () => (
  <svg width="26" height="32" viewBox="0 0 26 32">
    <text x="3" y="25" fontSize="28" fontWeight="700" fontFamily="Liberation Sans" fill="#2a8ce8">e</text>
    <path d="M24 6C18 3 6 11 2 27c6-8 12-16 22-21z" fill="none" stroke="#2a8ce8" strokeWidth="1.500" />
  </svg>
);

const FolderIcon = () => (
  <svg width="33" height="27" viewBox="0 0 33 27">
    <path d="M0 0h12l3 4H0z" fill="#d9a520" />
    <path d="M0 4h33v23H0z" fill="#f8d776" />
    <path d="M9 15h16v11h-4v-6h-8v6H9z" fill="#3f87c5" />
  </svg>
);

const StoreIcon = () => (
  <svg width="36" height="36" viewBox="0 0 36 36">
    <path d="M10 8V3h16v5" fill="none" stroke="#333" strokeWidth="3" />
    <path d="M1 8h34v26a2 2 0 0 1-2 2H3a2 2 0 0 1-2-2z" fill="#333" />
    <path d="M11 14h6v6h-6z" fill="#f25022" />
    <path d="M19 14h6v6h-6z" fill="#7fba00" />
    <path d="M11 22h6v6h-6z" fill="#00a4ef" />
    <path d="M19 22h6v6h-6z" fill="#ffb900" />
  </svg>
);

const MailIcon = () => (
  <svg width="36" height="34" viewBox="0 0 36 34">
    <path d="M0 11L18 0l18 11v23H0z" fill="#1d9bd8" />
    <path d="M6 6h24v14H6z" fill="#fff" />
    <path d="M0 11l18 12 18-12v23H0z" fill="#38b8ee" />
  </svg>
);

const CloudApp = () => (
  <svg width="35" height="36" viewBox="0 0 35 36">
    <rect width="35" height="36" rx="2" fill="#fff" />
    <path d="M11 25a6 6 0 1 1 4-10c1-6 9-6 10-1a5.500 5.500 0 1 1-2 11c-4 0-6-5-8-10M11 25c3 0 5-2 7-5" fill="none" stroke="#2fb38a" strokeWidth="3" />
  </svg>
);

const ChromeIcon = () => (
  <svg width="36" height="36" viewBox="0 0 36 36">
    <path d="M18 18L4 8a18 18 0 0 1 30 2z" fill="#e8453c" />
    <path d="M18 18L34 10a18 18 0 0 1-14 26z" fill="#f7c021" />
    <path d="M18 18l2 18A18 18 0 0 1 4 8z" fill="#4ea74f" />
    <circle cx="18" cy="18" r="8" fill="#fff" />
    <path d="M20 11l-5 8h3l-2 6 5-8h-3z" fill="#4a7ee8" />
  </svg>
);

const RecorderApp = () => (
  <svg width="36" height="36" viewBox="0 0 36 36">
    <rect width="36" height="36" rx="8" fill="#22302e" />
    <circle cx="18" cy="18" r="14" fill="none" stroke="#2ec79a" strokeWidth="1.500" />
    <circle cx="18" cy="18" r="11.500" fill="#12b98a" stroke="#fff" strokeWidth="1.500" />
  </svg>
);

const ExcelApp = () => (
  <svg width="36" height="35" viewBox="0 0 36 35">
    <path d="M8 0h27v35H8z" fill="#1d6f42" />
    <path d="M21 0h14v9H21z" fill="#33c481" />
    <path d="M8 0h13v9H8zM21 9h14v9H21z" fill="#21a366" />
    <path d="M21 18h14v9H21z" fill="#107c41" />
    <path d="M0 8h17v19H0z" fill="#107c41" />
    <text x="4" y="23" fontSize="15" fontWeight="700" fill="#fff" fontFamily="Liberation Sans">X</text>
  </svg>
);

const Badge360 = () => (
  <svg width="22" height="28" viewBox="0 0 22 28">
    <ellipse cx="11" cy="14" rx="11" ry="12" fill="#f5e12e" />
    <path d="M3 7a11 11 0 0 1 16 0l-3 2a8 8 0 0 0-10 0zM19 21a11 11 0 0 1-16 0l3-2a8 8 0 0 0 10 0z" fill="#27a24a" />
    <path d="M11 9v10M6 14h10" stroke="#1a8a3c" strokeWidth="2.600" />
  </svg>
);

const BatteryIcon = () => (
  <svg width="24" height="14" viewBox="0 0 24 14">
    <path d="M.7.7h20v12.600H.7z" fill="#fff" stroke="#000" strokeWidth="1.400" />
    <path d="M3 3h16v8H3z" fill="#000" />
    <path d="M21 4h3v6h-3z" fill="#000" />
  </svg>
);

const NoticeIcon = () => (
  <svg width="36" height="36" viewBox="0 0 36 36">
    <path d="M1 0h24v22H13l-5 6v-6H1z" fill="#000" />
    <path d="M6 6h14M6 10h14M6 14h14" stroke="#fff" strokeWidth="1.200" />
    <circle cx="24" cy="24" r="11" fill="#d8dcc0" stroke="#666" />
    <text x="19" y="31" fontSize="19" fontWeight="700" fontFamily="Liberation Sans" fill="#222">1</text>
  </svg>
);

/* ---------- data ---------- */

const COLS = [109, 107, 946, 109, 107, 108, 108, 108, 109, 36];

const COURSES = [
  ["专业课", "聚焦企业年报-关于严格执行企业会计准则，切实加强企业2023年年报工作通知的解读", 7],
  ["专业课", "企业会计准则第25号—保险合同", 3],
  ["专业课", "企业会计准则解释第14号要点解读", 8],
  ["专业课", "违反会计法的法律责任及案例分析", 8],
  ["专业课", "易错易混重大会计实务问题提示（上）", 3],
  ["专业课", "易错易混重大会计实务问题提示（下）", 4],
  ["专业课", "《关于规范电子会计凭证报销入账归档的通知》解读", 1],
  ["专业课", "个人所得税热点问题分析——境外所得政策详解", 6],
  ["专业课", "《车辆购置税法》解读", 4],
  ["专业课", "合同涉税管理——建筑安装合同的税收管控", 3],
  ["专业课", "合同涉税管理——借款合同的税收管控", 2],
  ["专业课", "合同涉税管理——用工合同的税收管控", 2],
  ["专业课", "s", 2],
  ["专业课", "企业会计准则第14号--收入", 6],
  ["专业课", "企业会计准则第16号--政府补助", 3],
  ["公需课", "玩转excel从此不加班（九）", 3],
  ["公需课", "玩转excel从此不加班（八）", 3],
  ["公需课", "消费者权益保护法", 10],
];

const rowHeight = (i) => (i === 0 ? 29 : i === 1 ? 28 : 33);

const Filter = () => (
  <FilterBtn>
    <Tri color="#777" />
  </FilterBtn>
);

// the double dash sits wider in the sheet than in the fallback font
const CourseName = ({ name }) => {
  const [head, tail] = name.split("——");
  if (tail === undefined) return name;
  return (
    <span>
      {head}
      <WideDash>——</WideDash>
      {tail}
    </span>
  );
};

function Grid() {
  return (
    <Sheet>
      <HeadRow>
        <Corner>
          <CornerTri />
        </Corner>
        {["A", "B", "C", "D", "E", "F", "G", "H", "I", ""].map((c, i) => (
          <ColHead key={c || "end"} $w={COLS[i]} $sel={c === "A"}>
            <ColLetter>{c}</ColLetter>
          </ColHead>
        ))}
      </HeadRow>

      <SheetRow $h={28}>
        <RowHead>1</RowHead>
        <Cell $w={COLS[0]} $head>
          序号
          <Filter />
        </Cell>
        <Cell $w={COLS[1]} $head>
          类型
          <Filter />
        </Cell>
        <Cell $w={COLS[2]} $head>
          课程名称
          <Filter />
        </Cell>
        <Cell $w={COLS[3]} $head>
          学分
          <Filter />
        </Cell>
        {COLS.slice(4).map((w, i) => (
          <Cell key={i} $w={w} />
        ))}
      </SheetRow>

      {COURSES.map(([kind, name, credit], i) => {
        const hl = i === 0;
        const soft = i < 2;
        return (
          <SheetRow key={i} $h={rowHeight(i)} $hl={hl}>
            <RowHead $sel>{i + 2}</RowHead>
            <Cell $w={COLS[0]} $num $sel={!hl} $bare={hl}>
              {i + 1}
            </Cell>
            <Cell $w={COLS[1]} $bare={hl} $color="#333">
              {kind}
            </Cell>
            <Cell $w={COLS[2]} $bare={hl} $tight={hl} $color={soft ? "#333" : "#111"}>
              <CourseName name={name} />
            </Cell>
            <Cell $w={COLS[3]} $num $bare={hl} $color="#333">
              {credit}
            </Cell>
            {COLS.slice(4).map((w, j) => (
              <Cell key={j} $w={w} $bare={hl} />
            ))}
          </SheetRow>
        );
      })}

      <SheetRow $h={5}>
        <RowHead $sel />
        <Cell $w={COLS[0]} $sel />
        {COLS.slice(1).map((w, j) => (
          <Cell key={j} $w={w} />
        ))}
      </SheetRow>

      <RangeBox />
      <CursorMark>
        <CrossCursor />
      </CursorMark>
    </Sheet>
  );
}

function RibbonGroups() {
  return (
    <Ribbon>
      <Group $w={143}>
        <GroupBody $row>
          <PasteCol>
            <PasteIcon />
            <PasteText>粘贴</PasteText>
            <Chev color="#aaa" />
          </PasteCol>
          <ToolCol>
            <Row $h={35} $pl={8}>
              <Tool $w={20}>
                <ScissorsIcon />
              </Tool>
            </Row>
            <Row $h={36} $pl={8}>
              <Tool $w={20}>
                <CopyIcon />
              </Tool>
              <Tool $w={32}>
                <Chev />
              </Tool>
            </Row>
            <Row $h={36} $pl={8}>
              <Tool $w={20}>
                <BrushIcon />
              </Tool>
            </Row>
          </ToolCol>
        </GroupBody>
        <GroupLabel $launcher>剪贴板</GroupLabel>
        <LauncherIcon />
      </Group>

      <Group $w={390}>
        <GroupBody>
          <Row $h={35} $mt={12} $pl={11}>
            <ComboBox $w={239}>
              等线
              <Tri />
            </ComboBox>
            <ComboBox $w={57} $ml={2}>
              11
              <Tri />
            </ComboBox>
            <Tool $w={33}>
              <AA $size={24}>
                A
                <AAMark>
                  <ArrowIcon dir="up" color="#5a7fb5" />
                </AAMark>
              </AA>
            </Tool>
            <Tool $w={29}>
              <AA $size={21}>
                A
                <AAMark>
                  <ArrowIcon dir="down" color="#5a7fb5" />
                </AAMark>
              </AA>
            </Tool>
          </Row>
          <Row $h={32} $mt={13} $pl={9}>
            <Tool $w={34}>
              <StyleLetter $bold>B</StyleLetter>
            </Tool>
            <Tool $w={34}>
              <StyleLetter $serif $italic $bold>
                I
              </StyleLetter>
            </Tool>
            <Tool $w={36}>
              <StyleLetter $under>U</StyleLetter>
            </Tool>
            <Tool $w={16}>
              <Chev />
            </Tool>
            <VSep $ml={9} />
            <Tool $w={37}>
              <BorderIcon />
            </Tool>
            <Tool $w={16}>
              <Chev />
            </Tool>
            <VSep $ml={9} />
            <Tool $w={38}>
              <FillIcon />
            </Tool>
            <Tool $w={16}>
              <Chev />
            </Tool>
            <Tool $w={42}>
              <FontColorIcon />
            </Tool>
            <Tool $w={12}>
              <Chev />
            </Tool>
            <VSep $ml={9} />
            <Tool $w={40}>
              <WenBox>
                <WenTop>wén</WenTop>
                <WenBottom>文</WenBottom>
              </WenBox>
            </Tool>
            <Tool $w={12}>
              <Chev />
            </Tool>
          </Row>
        </GroupBody>
        <GroupLabel $launcher>字体</GroupLabel>
        <LauncherIcon />
      </Group>

      <Group $w={262}>
        <GroupBody>
          <Row $h={35} $mt={12} $pl={11}>
            <Tool $w={34}>
              <AlignLines lines={[[0, 21, 4], [3, 18, 9]]} />
            </Tool>
            <Tool $w={34}>
              <AlignLines lines={[[3, 18, 6], [0, 21, 11]]} />
            </Tool>
            <Pressed $w={32}>
              <AlignLines lines={[[3, 18, 8], [0, 21, 12]]} />
            </Pressed>
            <Tool $w={35}>
              <OrientIcon />
            </Tool>
            <Tool $w={12}>
              <Chev />
            </Tool>
            <VSep $ml={28} $h={35} />
            <Tool $w={44}>
              <WrapBox>
                <span>ab</span>
                <span>c↵</span>
              </WrapBox>
            </Tool>
          </Row>
          <Row $h={32} $mt={13} $pl={11}>
            <Tool $w={34}>
              <AlignLines h={22} lines={[[0, 21, 1], [0, 21, 6], [0, 21, 11], [0, 21, 16], [0, 15, 21]]} />
            </Tool>
            <Tool $w={34}>
              <AlignLines h={22} lines={[[0, 21, 1], [3, 18, 6], [0, 21, 11], [3, 18, 16], [0, 21, 21]]} />
            </Tool>
            <Tool $w={34}>
              <AlignLines h={22} lines={[[0, 21, 1], [6, 21, 6], [0, 21, 11], [6, 21, 16], [0, 21, 21]]} />
            </Tool>
            <Tool $w={35}>
              <IndentIcon flip />
            </Tool>
            <Tool $w={34}>
              <IndentIcon />
            </Tool>
            <VSep $ml={5} />
            <Tool $w={42}>
              <MergeIcon />
            </Tool>
            <Tool $w={12}>
              <Chev />
            </Tool>
          </Row>
        </GroupBody>
        <GroupLabel $launcher>对齐方式</GroupLabel>
        <LauncherIcon />
      </Group>

      <Group $w={221}>
        <GroupBody>
          <Row $h={35} $mt={12} $pl={12}>
            <ComboBox $w={196}>
              常规
              <Tri />
            </ComboBox>
          </Row>
          <Row $h={32} $mt={13} $pl={12}>
            <Tool $w={32}>
              <CurrencyIcon />
            </Tool>
            <Tool $w={20}>
              <Chev />
            </Tool>
            <Tool $w={40}>
              <Percent>%</Percent>
            </Tool>
            <Tool $w={28}>
              <Comma>,</Comma>
            </Tool>
            <VSep $ml={6} />
            <Tool $w={39}>
              <Decimals>
                <DecArrow>←</DecArrow>.0
                <br />
                .00
              </Decimals>
            </Tool>
            <Tool $w={30}>
              <Decimals>
                .00
                <br />
                <DecArrow>→</DecArrow>.0
              </Decimals>
            </Tool>
          </Row>
        </GroupBody>
        <GroupLabel $launcher>数字</GroupLabel>
        <LauncherIcon />
      </Group>

      <Group $w={296}>
        <GroupBody $row $pad={12}>
          <BigBtn $w={82}>
            <BigIcon>
              <CondIcon />
            </BigIcon>
            <BigLine>条件格式</BigLine>
            <BigLine>
              <Chev />
            </BigLine>
          </BigBtn>
          <BigBtn $w={87}>
            <BigIcon>
              <TableStyleIcon />
            </BigIcon>
            <BigLine>套用</BigLine>
            <BigLine>
              表格格式
              <Chev />
            </BigLine>
          </BigBtn>
          <BigBtn $w={108}>
            <BigIcon>
              <TableStyleIcon plain />
            </BigIcon>
            <BigLine>单元格样式</BigLine>
            <BigLine>
              <Chev />
            </BigLine>
          </BigBtn>
        </GroupBody>
        <GroupLabel>样式</GroupLabel>
      </Group>

      <Group $w={126}>
        <GroupBody>
          <Row $h={29} $pl={17}>
            <Tool $w={24} $h={29}>
              <CellOp />
            </Tool>
            <CellsText>插入</CellsText>
            <Tool $w={36}>
              <Chev />
            </Tool>
          </Row>
          <Row $h={36} $pl={17}>
            <Tool $w={24} $h={30}>
              <CellOp del />
            </Tool>
            <CellsText>删除</CellsText>
            <Tool $w={36}>
              <Chev />
            </Tool>
          </Row>
          <Row $h={30} $mt={1} $pl={17}>
            <Tool $w={24} $h={30}>
              <CellOp fmt />
            </Tool>
            <CellsText>格式</CellsText>
            <Tool $w={20}>
              <Chev />
            </Tool>
          </Row>
        </GroupBody>
        <GroupLabel>单元格</GroupLabel>
      </Group>

      <Group $w={274}>
        <GroupBody $row $pad={17}>
          <ToolCol>
            <Row $h={30}>
              <Tool $w={20}>
                <SigmaIcon />
              </Tool>
              <Tool $w={30}>
                <Chev />
              </Tool>
            </Row>
            <Row $h={36} $mt={1}>
              <Tool $w={20}>
                <FillDownIcon />
              </Tool>
              <Tool $w={24}>
                <Chev />
              </Tool>
            </Row>
            <Row $h={32}>
              <Tool $w={20}>
                <EraserIcon />
              </Tool>
              <Tool $w={24}>
                <Chev />
              </Tool>
            </Row>
          </ToolCol>
          <BigBtn $w={96}>
            <BigIcon>
              <SortIcon />
            </BigIcon>
            <BigLine>排序和筛选</BigLine>
            <BigLine>
              <Chev />
            </BigLine>
          </BigBtn>
          <BigBtn $w={98}>
            <BigIcon>
              <FindIcon />
            </BigIcon>
            <BigLine>查找和选择</BigLine>
            <BigLine>
              <Chev />
            </BigLine>
          </BigBtn>
        </GroupBody>
        <GroupLabel>编辑</GroupLabel>
      </Group>

      <Group $w={102}>
        <GroupBody $row>
          <BigBtn $w={101}>
            <BigIcon>
              <BaiduIcon />
            </BigIcon>
            <BigLine>保存到</BigLine>
            <BigLine>百度网盘</BigLine>
          </BigBtn>
        </GroupBody>
        <GroupLabel>保存</GroupLabel>
      </Group>

      <Collapse>
        <svg width="17" height="10" viewBox="0 0 17 10">
          <path d="M1 9l7.500-7.500L16 9" fill="none" stroke="#444" strokeWidth="1.500" />
        </svg>
      </Collapse>
    </Ribbon>
  );
}

export default function App() {
  return (
    <Page>
      <GlobalStyle />

      <TitleBar>
        <Tool $w={51}>
          <SaveIcon />
        </Tool>
        <Tool $w={35}>
          <UndoIcon />
        </Tool>
        <Tool $w={14}>
          <Chev color="#fff" />
        </Tool>
        <Tool $w={35} $ml={8}>
          <UndoIcon color="#4f9a72" flip />
        </Tool>
        <Tool $w={14}>
          <Chev color="#4f9a72" />
        </Tool>
        <Tool $w={16} $ml={18}>
          <CustomizeIcon />
        </Tool>
        <Title>2021继续教育（启用宏）.xlsm  -  Excel</Title>
        <Login>登录</Login>
        <Tool $w={96}>
          <RestoreIcon />
        </Tool>
        <RecDot />
        <RecText>轻映录屏</RecText>
      </TitleBar>

      <ImeBar>
        <Tool $w={40} $h={38}>
          <ImeChar>中</ImeChar>
        </Tool>
        <Tool $w={40} $h={38}>
          <MoonIcon />
        </Tool>
        <Tool $w={38} $h={38}>
          <PunctIcon />
        </Tool>
        <Tool $w={42} $h={38}>
          <KeyboardIcon />
        </Tool>
        <Tool $w={38} $h={38}>
          <GearIcon />
        </Tool>
      </ImeBar>

      <TabBar>
        <Tab $mr={2}>文件</Tab>
        <Tab $active>开始</Tab>
        <Tab>插入</Tab>
        <Tab>页面布局</Tab>
        <Tab>公式</Tab>
        <Tab>数据</Tab>
        <Tab>审阅</Tab>
        <Tab>视图</Tab>
        <Tab>开发工具</Tab>
        <Tab>帮助</Tab>
        <Tab>百度网盘</Tab>
        <SearchHint>
          <BulbIcon />
          操作说明搜索
        </SearchHint>
        <ShareBtn>
          <ShareIcon />
          共享
        </ShareBtn>
      </TabBar>

      <RibbonGroups />

      <FormulaBar>
        <NameBox>
          A2
          <Tri color="#777" />
        </NameBox>
        <Grip>
          <GripDots />
        </Grip>
        <FxBox>
          <CrossIcon />
          <Tool $w={19} $ml={36}>
            <CheckIcon />
          </Tool>
          <FxSign>fx</FxSign>
        </FxBox>
        <FormulaInput>
          1
          <InputChev>
            <Chev />
          </InputChev>
        </FormulaInput>
      </FormulaBar>

      <SheetArea>
        <Grid />
        <VScroll>
          <ScrollBtn $mt={1}>
            <ArrowIcon dir="up" />
          </ScrollBtn>
          <VThumb />
          <VTrack />
          <ScrollBtn>
            <ArrowIcon dir="down" />
          </ScrollBtn>
        </VScroll>
        <GreenHandle />
      </SheetArea>

      <SheetTabs>
        <Tool $w={14} $ml={25} $h={33}>
          <ArrowIcon dir="left" color="#bbb" />
        </Tool>
        <Tool $w={14} $ml={19} $h={33}>
          <ArrowIcon dir="right" color="#bbb" />
        </Tool>
        <Tool $w={1} $ml={43} $h={1} />
        <SheetTab $w={65} $active>
          目录
        </SheetTab>
        <SheetTab $w={61}>题目</SheetTab>
        <VSep $h={26} />
        <Tool $w={23} $ml={38} $h={33}>
          <PlusCircle />
        </Tool>
        <Tool $w={5} $ml={843} $h={33}>
          <GripDots />
        </Tool>
        <HScrollBtn $ml={17}>
          <ArrowIcon dir="left" color="#666" />
        </HScrollBtn>
        <HThumb />
        <HTrack />
        <HScrollBtn>
          <ArrowIcon dir="right" color="#666" />
        </HScrollBtn>
      </SheetTabs>

      <StatusBar>
        就绪
        <Tool $w={21} $ml={29} $h={33}>
          <MacroIcon />
        </Tool>
        <StatText $ml={1055}>平均值: 11</StatText>
        <StatText $ml={38}>计数: 21</StatText>
        <StatText $ml={25}>求和: 231</StatText>
        <ViewBtn $w={59} $ml={29} $on>
          <NormalView />
        </ViewBtn>
        <ViewBtn $w={60}>
          <PageView />
        </ViewBtn>
        <ViewBtn $w={60}>
          <BreakView />
        </ViewBtn>
        <ZoomSign $ml={8}>−</ZoomSign>
        <Slider>
          <SliderThumb />
        </Slider>
        <ZoomSign $ml={8}>+</ZoomSign>
        <StatText $ml={22}>100%</StatText>
      </StatusBar>

      <Taskbar>
        <TaskSlot $w={72}>
          <WinIcon />
        </TaskSlot>
        <TaskSlot $w={78}>
          <FanIcon />
        </TaskSlot>
        <SearchBox>
          <IeIcon />
          <Tri color="#aaa" />
          <SearchLabel>平板打印机</SearchLabel>
        </SearchBox>
        <SearchGo>搜索一下</SearchGo>
        <TaskSlot $w={75}>
          <FolderIcon />
        </TaskSlot>
        <TaskSlot $w={75}>
          <StoreIcon />
        </TaskSlot>
        <TaskSlot $w={75}>
          <MailIcon />
        </TaskSlot>
        <TaskSlot $w={75} $mark={61}>
          <CloudApp />
        </TaskSlot>
        <TaskSlot $w={75}>
          <ChromeIcon />
        </TaskSlot>
        <TaskSlot $w={75} $mark={61}>
          <RecorderApp />
        </TaskSlot>
        <TaskSlot $w={75} $active $mark={75}>
          <ExcelApp />
        </TaskSlot>
        <Tray>
          <Tool $w={36} $h={60}>
            <svg width="18" height="11" viewBox="0 0 18 11">
              <path d="M1 10l8-8.500 8 8.500" fill="none" stroke="#111" strokeWidth="1.400" />
            </svg>
          </Tool>
          <Tool $w={35} $h={60}>
            <Badge360 />
          </Tool>
          <Tool $w={39} $h={60}>
            <BatteryIcon />
          </Tool>
          <Tool $w={28} $h={60}>
            <TrayIme>中</TrayIme>
          </Tool>
          <Tool $w={58} $h={60}>
            <WanBox>万</WanBox>
          </Tool>
          <Clock>
            20:57 周日
            <br />
            2021/8/22
          </Clock>
          <Tool $w={74} $h={60}>
            <NoticeIcon />
          </Tool>
        </Tray>
      </Taskbar>
    </Page>
  );
}
